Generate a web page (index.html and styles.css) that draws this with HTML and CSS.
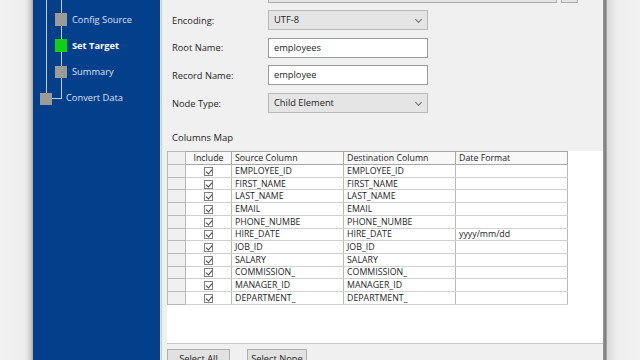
FILE: index.html
```html
<!DOCTYPE html>
<html>
<head>
<meta charset="utf-8">
<link rel="stylesheet" href="styles.css">
</head>
<body>
<div class="edge"></div>
<nav class="nav">
  <svg class="tree" width="127" height="110" viewBox="0 0 127 110">
    <g stroke="#c9cdd6" stroke-width="1" fill="none">
      <line x1="13.5" y1="0" x2="13.5" y2="94"/>
      <line x1="28.5" y1="0" x2="28.5" y2="98.5"/>
      <line x1="19" y1="98.5" x2="29" y2="98.5"/>
    </g>
    <rect x="22" y="13" width="12" height="13" fill="#9b9b98"/>
    <rect x="22" y="39" width="12" height="13" fill="#10d010"/>
    <rect x="22" y="66" width="12" height="12" fill="#9b9b98"/>
    <rect x="7" y="93" width="12" height="12" fill="#9b9b98"/>
  </svg>
  <ul class="steps">
    <li class="step">Config Source</li>
    <li class="step current">Set Target</li>
    <li class="step">Summary</li>
    <li class="step top">Convert Data</li>
  </ul>
</nav>
<main class="main">
  <div class="topbar">
    <div class="topfield"></div>
    <div class="topbtn"></div>
  </div>
  <div class="form">
    <label class="lbl">Encoding:</label>
    <div class="select">UTF-8<span class="chev"></span></div>
    <label class="lbl">Root Name:</label>
    <div class="input">employees</div>
    <label class="lbl">Record Name:</label>
    <div class="input">employee</div>
    <label class="lbl">Node Type:</label>
    <div class="select">Child Element<span class="chev"></span></div>
  </div>
  <div class="caption">Columns Map</div>
  <div class="grid">
    <table class="tbl">
      <colgroup>
        <col class="c-rh"><col class="c-inc"><col class="c-src"><col class="c-dst"><col class="c-fmt">
      </colgroup>
      <thead>
        <tr><th class="rh"></th><th class="inc">Include</th><th>Source Column</th><th>Destination Column</th><th>Date Format</th></tr>
      </thead>
      <tbody>
        <tr><td class="rh"></td><td class="inc"><span class="cb"></span></td><td>EMPLOYEE_ID</td><td>EMPLOYEE_ID</td><td></td></tr>
        <tr><td class="rh"></td><td class="inc"><span class="cb"></span></td><td>FIRST_NAME</td><td>FIRST_NAME</td><td></td></tr>
        <tr><td class="rh"></td><td class="inc"><span class="cb"></span></td><td>LAST_NAME</td><td>LAST_NAME</td><td></td></tr>
        <tr><td class="rh"></td><td class="inc"><span class="cb"></span></td><td>EMAIL</td><td>EMAIL</td><td></td></tr>
        <tr><td class="rh"></td><td class="inc"><span class="cb"></span></td><td>PHONE_NUMBE</td><td>PHONE_NUMBE</td><td></td></tr>
        <tr><td class="rh"></td><td class="inc"><span class="cb"></span></td><td>HIRE_DATE</td><td>HIRE_DATE</td><td>yyyy/mm/dd</td></tr>
        <tr><td class="rh"></td><td class="inc"><span class="cb"></span></td><td>JOB_ID</td><td>JOB_ID</td><td></td></tr>
        <tr><td class="rh"></td><td class="inc"><span class="cb"></span></td><td>SALARY</td><td>SALARY</td><td></td></tr>
        <tr><td class="rh"></td><td class="inc"><span class="cb"></span></td><td>COMMISSION_</td><td>COMMISSION_</td><td></td></tr>
        <tr><td class="rh"></td><td class="inc"><span class="cb"></span></td><td>MANAGER_ID</td><td>MANAGER_ID</td><td></td></tr>
        <tr><td class="rh"></td><td class="inc"><span class="cb"></span></td><td>DEPARTMENT_</td><td>DEPARTMENT_</td><td></td></tr>
      </tbody>
    </table>
  </div>
  <div class="buttons">
    <button class="btn">Select All</button>
    <button class="btn">Select None</button>
  </div>
</main>
<div class="frame"></div>
<div class="outside"></div>
</body>
</html>
```
FILE: styles.css
```css
* { box-sizing: border-box; }
html, body { margin: 0; padding: 0; }
body {
  width: 640px;
  height: 360px;
  overflow: hidden;
  display: flex;
  font-family: "Open Sans", "Noto Sans", sans-serif;
  font-size: 9.5px;
  color: #1e1e1e;
  background: #f0f0f0;
}
.edge {
  width: 33px;
  flex: none;
  background: linear-gradient(to right, #f1f1f1 0, #eeeeee 25px, #d4d4d4 30px, #a9a9a9 33px);
}
.nav {
  width: 127px;
  flex: none;
  background: #033f8b;
  position: relative;
}
.tree { position: absolute; left: 0; top: 0; }
.steps {
  list-style: none;
  margin: 0;
  padding: 7px 0 0 0;
  position: relative;
}
.step {
  height: 26px;
  line-height: 26px;
  padding-left: 39px;
  color: #d8e2f2;
  font-size: 9.3px;
  white-space: nowrap;
}
.step.current { font-weight: 700; color: #ffffff; }
.step.top { padding-left: 33px; }

.main {
  width: 443px;
  flex: none;
  height: 360px;
  overflow: hidden;
  background: #f0f0f0;
  border-left: 1px solid #e6e6e6;
  box-shadow: inset 6px 0 0 -5px #c3ccd8;
  display: flex;
  flex-direction: column;
}
.main > * { flex: none; }
.topbar {
  height: 3px;
  display: flex;
  gap: 4px;
  padding-left: 107px;
}
.topfield {
  width: 289px;
  height: 3px;
  background: #e4e4e4;
  border: 1px solid #adadad;
  border-top: none;
}
.topbtn {
  width: 17px;
  height: 3px;
  background: #e4e4e4;
  border: 1px solid #adadad;
  border-top: none;
}
.form {
  display: grid;
  grid-template-columns: 96px 160px;
  grid-auto-rows: 20px;
  row-gap: 7.7px;
  margin-top: 7px;
  padding-left: 11px;
  align-items: center;
}
.lbl { font-size: 9.3px; }
.select, .input {
  height: 20px;
  line-height: 18px;
  padding-left: 5px;
  font-size: 9.3px;
  position: relative;
}
.select {
  background: #e5e5e5;
  border: 1px solid #b9b9b9;
}
.input {
  background: #ffffff;
  border: 1px solid #9a9a9a;
}
.chev {
  position: absolute;
  right: 6px;
  top: 6px;
  width: 5px;
  height: 5px;
  border-right: 1px solid #6d6d6d;
  border-bottom: 1px solid #6d6d6d;
  transform: rotate(45deg);
}
.caption {
  margin-top: 18px;
  padding-left: 11px;
  height: 14px;
  line-height: 14px;
}
.grid {
  margin: 6px 0 0 6px;
  height: 193px;
  background: #ffffff;
  border-bottom: 1px solid #c8c8c8;
}
.tbl {
  border-collapse: collapse;
  table-layout: fixed;
  width: 400px;
  font-size: 8.8px;
}
.c-rh { width: 18px; }
.c-inc { width: 46px; }
.c-src { width: 112px; }
.c-dst { width: 112px; }
.c-fmt { width: 112px; }
.tbl th {
  height: 13px;
  font-weight: 400;
  text-align: left;
  padding: 0 0 0 3px;
  background: #f8f8f8;
  border: 1px solid #a8a8a8;
  line-height: 11px;
  white-space: nowrap;
  overflow: hidden;
}
.tbl th.inc { text-align: center; padding: 0; }
.tbl td {
  height: 12.7px;
  padding: 0 0 0 3px;
  border: 1px solid #d0d0d0;
  border-left-color: #b8b8b8;
  border-right-color: #b8b8b8;
  line-height: 10px;
  white-space: nowrap;
  overflow: hidden;
}
.tbl td.rh, .tbl th.rh { background: #f0f0f0; border-color: #b8b8b8; padding: 0; }
.tbl td.inc { text-align: center; padding: 0; }
.cb {
  display: inline-block;
  width: 9px;
  height: 9px;
  border: 1px solid #808080;
  background: #fff;
  position: relative;
  vertical-align: middle;
}
.cb::after {
  content: "";
  position: absolute;
  left: 2px;
  top: 0px;
  width: 3px;
  height: 5px;
  border-right: 1px solid #444;
  border-bottom: 1px solid #444;
  transform: rotate(40deg);
}
.buttons {
  display: flex;
  gap: 17px;
  margin: 5px 0 0 6px;
}
.btn {
  font-family: inherit;
  font-size: 9.3px;
  height: 18px;
  padding: 0;
  background: #e1e1e1;
  border: 1px solid #adadad;
  color: #1e1e1e;
}
.btn:first-child { width: 63px; }
.btn:last-child { width: 60px; }
.frame {
  width: 4px;
  flex: none;
  background: linear-gradient(to right, #9a9a9a, #7c7c7c 60%, #b0b0b0);
}
.outside {
  flex: 1;
  background: linear-gradient(to right, #d8d8d8, #eeeeee 10px, #f2f2f2);
}
```
